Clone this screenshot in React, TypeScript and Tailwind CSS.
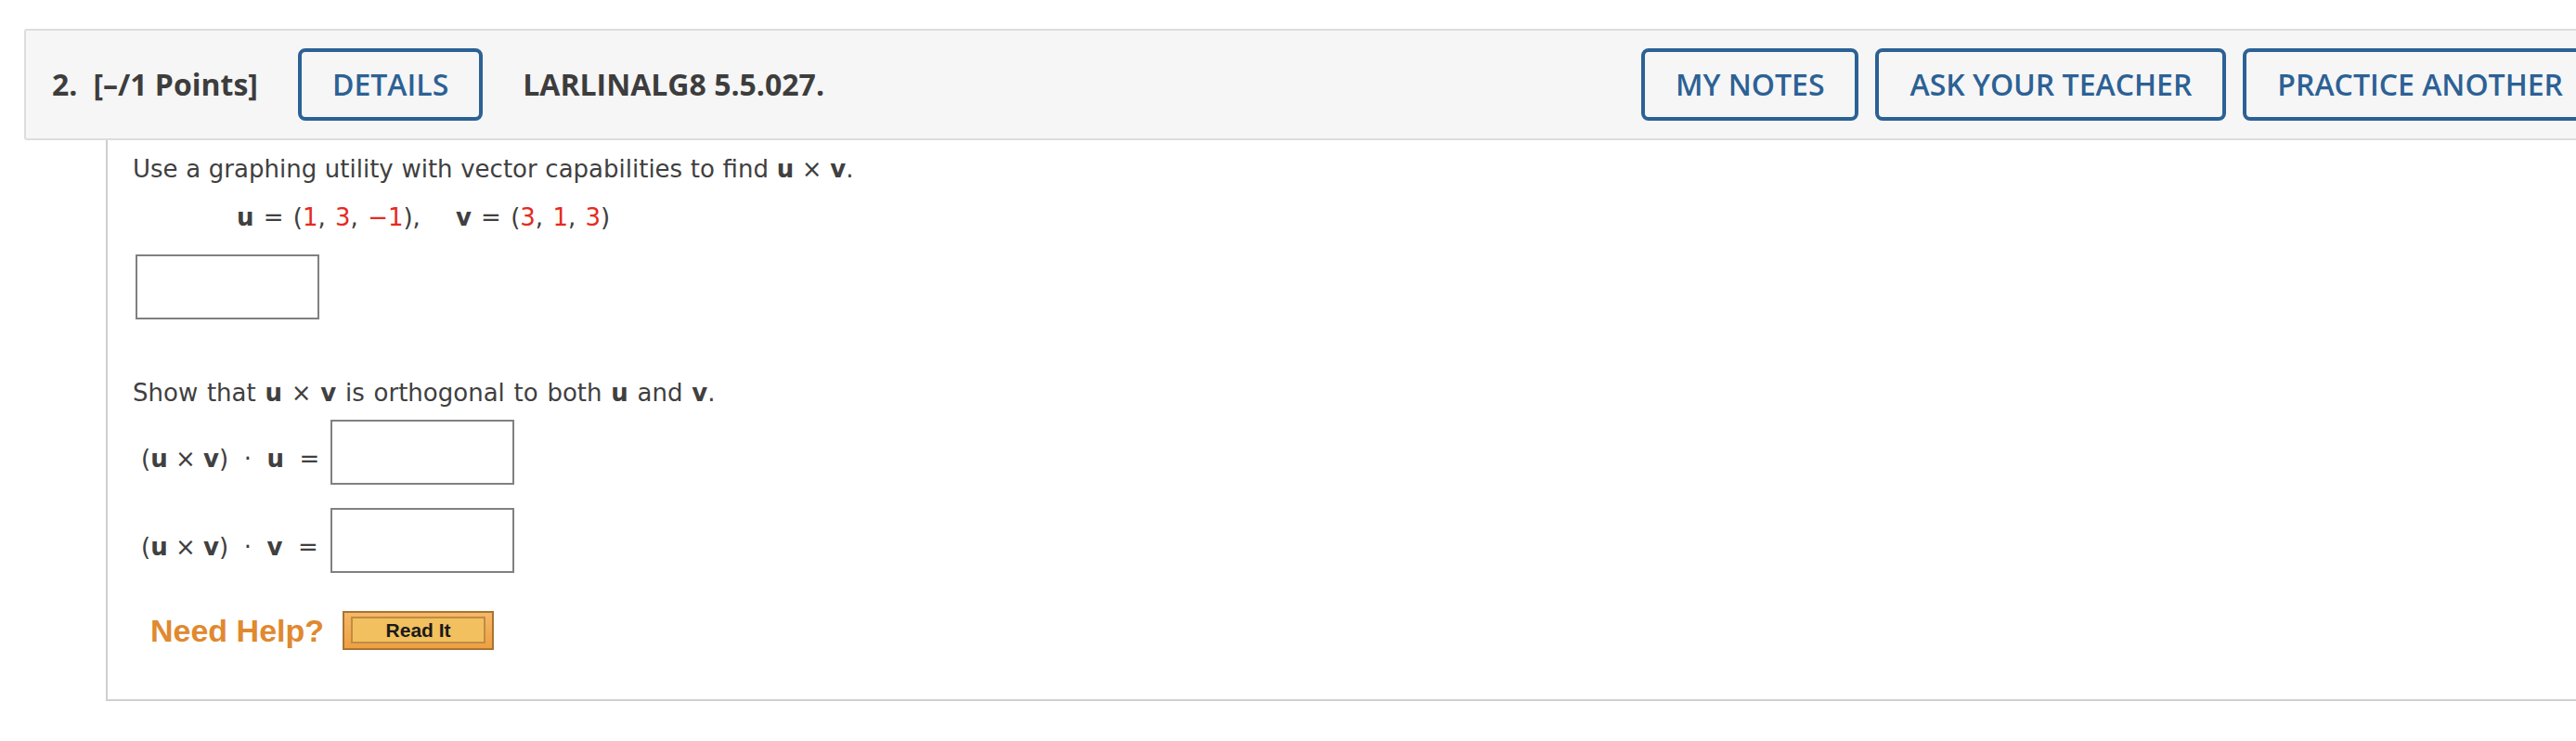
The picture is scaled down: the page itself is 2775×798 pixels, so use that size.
import React from "react";

const openSans = { fontFamily: '"Open Sans", "Liberation Sans", sans-serif' };
const verdana = { fontFamily: '"DejaVu Sans", Verdana, sans-serif' };
const arial = { fontFamily: '"Liberation Sans", Arial, sans-serif' };

function HeaderButton({ label }: { label: string }) {
  return (
    <div className="flex h-[78px] items-center rounded-[8px] border-4 border-[#2c6195] px-[33px] text-[32px] font-semibold leading-none text-[#2c6195]">
      {label}
    </div>
  );
}

function AnswerBox() {
  return <div className="h-[70px] w-[198px] border-2 border-[#808080] bg-white" />;
}

function Red({ children }: { children: React.ReactNode }) {
  return <span className="text-[#e62a20]">{children}</span>;
}

export default function App() {
  return (
    <div className="h-[798px] w-[2775px] overflow-hidden bg-white">
      <div className="w-[2828px] pl-[26px] pt-[31px]">
        <div
          className="flex h-[120px] items-center rounded-[3px] border-2 border-[#dddddd] bg-[#f6f6f6] pl-[28px] pr-[28px] text-[#3d3d3d]"
          style={openSans}
        >
          <span className="text-[32px] font-bold leading-none">2.</span>
          <span className="ml-[17px] text-[32px] font-bold leading-none">[–/1 Points]</span>
          <div className="ml-[43px]">
            <HeaderButton label="DETAILS" />
          </div>
          <span className="ml-[43px] text-[32px] font-bold leading-none">LARLINALG8 5.5.027.</span>
          <div className="ml-auto flex gap-[18px]">
            <HeaderButton label="MY NOTES" />
            <HeaderButton label="ASK YOUR TEACHER" />
            <HeaderButton label="PRACTICE ANOTHER" />
          </div>
        </div>

        <div
          className="ml-[88px] h-[604px] border-b-2 border-l-2 border-[#cfcfcf] pl-[27px] pt-[15px] text-[26px] leading-[32px] text-[#404040]"
          style={verdana}
        >
          <div className="[word-spacing:0.4px]">
            Use a graphing utility with vector capabilities to find <b>u</b> × <b>v</b>.
          </div>
          <div className="ml-[112px] mt-[20px] flex whitespace-pre [word-spacing:2px]">
            <span>
              <b>u</b> = (<Red>1</Red>, <Red>3</Red>, <Red>−1</Red>),
            </span>
            <span className="ml-[38px]">
              <b>v</b> = (<Red>3</Red>, <Red>1</Red>, <Red>3</Red>)
            </span>
          </div>
          <div className="ml-[3px] mt-[24px]">
            <AnswerBox />
          </div>

          <div className="mt-[63px] [word-spacing:1.5px]">
            Show that <b>u</b> × <b>v</b> is orthogonal to both <b>u</b> and <b>v</b>.
          </div>

          <div className="mt-[13px] flex items-end">
            <div className="mb-[12px] w-[213px] whitespace-pre pl-[9px]">
              (<b>u</b> × <b>v</b>)  ·  <b>u</b>  =
            </div>
            <AnswerBox />
          </div>

          <div className="mt-[25px] flex items-end">
            <div className="mb-[12px] w-[213px] whitespace-pre pl-[9px]">
              (<b>u</b> × <b>v</b>)  ·  <b>v</b>  =
            </div>
            <AnswerBox />
          </div>

          <div className="mt-[41px] flex h-[42px] items-center" style={arial}>
            <span className="ml-[19px] text-[34px] font-bold leading-[42px] text-[#e0892f]">Need Help?</span>
            <div className="ml-[20px] h-[42px] w-[163px] border-2 border-[#a87434] bg-[linear-gradient(#f6b868,#eea042)] px-[7px] pb-[5px] pt-[4px]">
              <div className="flex h-full w-full items-center justify-center border-2 border-[#c08c44] bg-[#f2c05e] text-[21px] font-bold leading-none text-[#1a1a1a]">
                Read It
              </div>
            </div>
          </div>
        </div>
      </div>
    </div>
  );
}
